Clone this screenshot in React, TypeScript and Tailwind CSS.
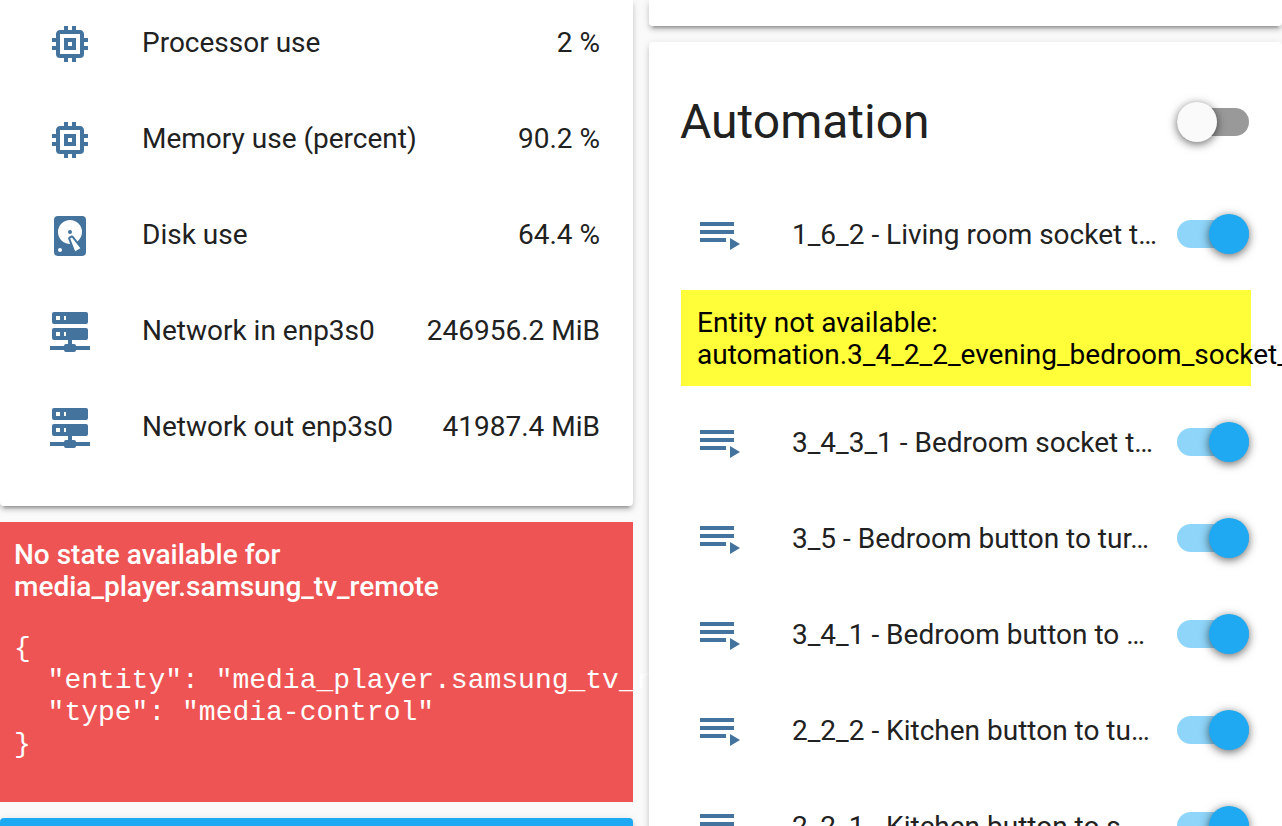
import { useState } from "react";

const ICONS = {
  memory:
    "M17,17H7V7H17M21,11V9H19V7C19,5.89 18.1,5 17,5H15V3H13V5H11V3H9V5H7C5.89,5 5,5.89 5,7V9H3V11H5V13H3V15H5V17A2,2 0 0,0 7,19H9V21H11V19H13V21H15V19H17A2,2 0 0,0 19,17V15H21V13H19V11M13,13H11V11H13M15,9H9V15H15V9Z",
  harddisk:
    "M6,2H18A2,2 0 0,1 20,4V20A2,2 0 0,1 18,22H6A2,2 0 0,1 4,20V4A2,2 0 0,1 6,2M12,4A6,6 0 0,0 6,10C6,13.31 8.69,16 12.1,16L11.22,13.77C10.95,13.29 11.11,12.68 11.59,12.4L12.45,11.9C12.93,11.63 13.54,11.79 13.82,12.27L15.74,14.69C17.12,13.59 18,11.9 18,10A6,6 0 0,0 12,4M12,9A1,1 0 0,1 13,10A1,1 0 0,1 12,11A1,1 0 0,1 11,10A1,1 0 0,1 12,9M7,18A1,1 0 0,0 6,19A1,1 0 0,0 7,20A1,1 0 0,0 8,19A1,1 0 0,0 7,18M12.09,13.27L14.58,19.58L17.17,18.08L12.95,12.77L12.09,13.27Z",
  network:
    "M13,18H14A1,1 0 0,1 15,19H22V21H15A1,1 0 0,1 14,22H10A1,1 0 0,1 9,21H2V19H9A1,1 0 0,1 10,18H11V16H4A1,1 0 0,1 3,15V11A1,1 0 0,1 4,10H20A1,1 0 0,1 21,11V15A1,1 0 0,1 20,16H13V18M4,2H20A1,1 0 0,1 21,3V7A1,1 0 0,1 20,8H4A1,1 0 0,1 3,7V3A1,1 0 0,1 4,2M9,6H10V4H9V6M9,14H10V12H9V14M5,4V6H7V4H5M5,12V14H7V12H5Z",
  playlist: "M19,9H2V11H19V9M19,5H2V7H19V5M2,15H15V13H2V15M17,13V19L22,16L17,13Z",
};

type IconName = keyof typeof ICONS;

const sensors: { icon: IconName; name: string; state: string }[] = [
  { icon: "memory", name: "Processor use", state: "2 %" },
  { icon: "memory", name: "Memory use (percent)", state: "90.2 %" },
  { icon: "harddisk", name: "Disk use", state: "64.4 %" },
  { icon: "network", name: "Network in enp3s0", state: "246956.2 MiB" },
  { icon: "network", name: "Network out enp3s0", state: "41987.4 MiB" },
];

const automations = [
  "3_4_3_1 - Bedroom socket t…",
  "3_5 - Bedroom button to tur…",
  "3_4_1 - Bedroom button to …",
  "2_2_2 - Kitchen button to tu…",
  "2_2_1 - Kitchen button to s…",
];

const errorConfig = `{
  "entity": "media_player.samsung_tv_remote",
  "type": "media-control"
}`;

const cardShadow =
  "shadow-[0_4px_4px_0_rgba(0,0,0,0.14),0_2px_10px_0_rgba(0,0,0,0.12),0_6px_2px_-4px_rgba(0,0,0,0.2)]";

function StateIcon({ name }: { name: IconName }) {
  return (
    <span className="flex size-20 shrink-0 items-center justify-center pt-1">
      <svg viewBox="0 0 24 24" className="size-12 fill-[#44739e]" aria-hidden="true">
        <path d={ICONS[name]} />
      </svg>
    </span>
  );
}

function Switch({ id, label, initial }: { id: string; label?: string; initial: boolean }) {
  const [on, setOn] = useState(initial);
  return (
    <input
      id={id}
      type="checkbox"
      role="switch"
      aria-label={label}
      checked={on}
      onChange={(e) => setOn(e.target.checked)}
      className="flex h-7 w-18 shrink-0 cursor-pointer appearance-none items-center rounded-full bg-[#999999] before:size-10 before:shrink-0 before:rounded-full before:bg-[#fafafa] before:shadow-[0_2px_10px_0_rgba(0,0,0,0.6)] checked:justify-end checked:bg-[#8fd5f9] checked:before:bg-[#1fa9f2]"
    />
  );
}

function AutomationRow({ id, name }: { id: string; name: string }) {
  return (
    <li className="flex h-20 items-center pr-0.5">
      <StateIcon name="playlist" />
      <label htmlFor={id} className="min-w-0 flex-1 truncate pt-0.5 pl-8">
        {name}
      </label>
      <Switch id={id} initial={true} />
    </li>
  );
}

export default function App() {
  return (
    <main className="grid h-screen grid-cols-2 gap-4 overflow-hidden bg-[#fafafa] font-[Roboto,sans-serif] text-[28px] leading-8 text-[#212121]">
      <div className="flex min-w-0 flex-col gap-4">
        <section className={`rounded-b bg-white pt-0.5 pr-[33px] pb-10 pl-[30px] ${cardShadow}`}>
          <ul className="flex flex-col gap-4">
            {sensors.map((s) => (
              <li key={s.name} className="flex h-20 items-center">
                <StateIcon name={s.icon} />
                <span className="min-w-0 flex-1 truncate pt-0.5 pl-8">{s.name}</span>
                <span className="shrink-0 pt-0.5">{s.state}</span>
              </li>
            ))}
          </ul>
        </section>

        <section className="h-70 shrink-0 bg-[#ee5454] px-3.5 pt-[17px] text-white">
          <p className="font-medium">
            No state available for
            <br />
            media_player.samsung_tv_remote
          </p>
          <pre className="mt-[30px] font-['Courier_New','Liberation_Mono',monospace]">{errorConfig}</pre>
        </section>

        <section className={`h-24 shrink-0 rounded-t bg-[#1fa9f2] ${cardShadow}`} />
      </div>

      <div className="relative flex min-w-0 flex-col gap-4">
        <section className={`h-[26px] shrink-0 rounded-b bg-white ${cardShadow}`} />

        <section className={`shrink-0 rounded bg-white px-[31px] py-10 ${cardShadow}`}>
          <header className="mb-8 flex h-20 items-center justify-between pr-0.5">
            <h1 className="text-5xl">Automation</h1>
            <Switch id="automation-all" label="Automation" initial={false} />
          </header>
          <ul className="flex flex-col gap-4">
            <AutomationRow id="automation-living-room" name="1_6_2 - Living room socket t…" />
            <li className="ml-px bg-[#fffe38] px-4 pt-[17px] pb-[15px] whitespace-nowrap text-black">
              Entity not available:
              <br />
              automation.3_4_2_2_evening_bedroom_socket_
            </li>
            {automations.map((name, i) => (
              <AutomationRow key={name} id={`automation-${i}`} name={name} />
            ))}
          </ul>
        </section>
      </div>
    </main>
  );
}
